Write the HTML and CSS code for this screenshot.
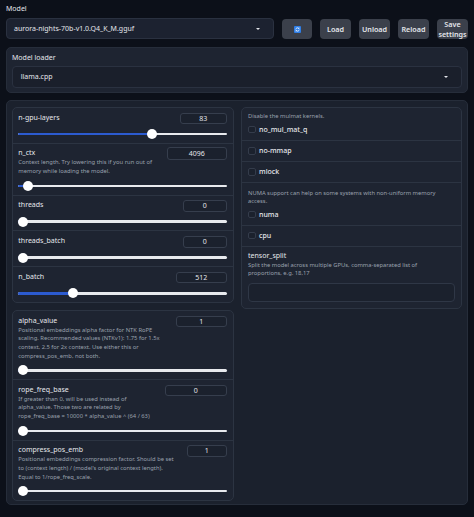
FILE: index.html
```html
<!DOCTYPE html>
<html>
<head>
<meta charset="utf-8">
<link rel="stylesheet" href="styles.css">
</head>
<body>
<div class="page">
  <div class="toprow">
    <div class="model-field">
      <div class="field-label">Model</div>
      <div class="select top-select"><span>aurora-nights-70b-v1.0.Q4_K_M.gguf</span><span class="caret"></span></div>
    </div>
    <button class="btn icon-btn"><svg width="7" height="7" viewBox="0 0 14 14"><rect width="14" height="14" rx="2" fill="#2f7ee6"/><path d="M3.6 7a3.4 3.4 0 0 1 5.9-2.3" fill="none" stroke="#fff" stroke-width="1.6"/><path d="M10.4 7a3.4 3.4 0 0 1-5.9 2.3" fill="none" stroke="#fff" stroke-width="1.6"/><path d="M10.6 2.6v3h-3z" fill="#fff"/><path d="M3.4 11.4v-3h3z" fill="#fff"/></svg></button>
    <button class="btn">Load</button>
    <button class="btn">Unload</button>
    <button class="btn">Reload</button>
    <button class="btn save">Save settings</button>
  </div>

  <div class="loader">
    <div class="field-label">Model loader</div>
    <div class="select inner-select"><span>llama.cpp</span><span class="caret"></span></div>
  </div>

  <div class="panel">
    <div class="col">
      <div class="group">
        <div class="row">
          <div class="head"><div class="lbl">n-gpu-layers</div><div class="num w47">83</div></div>
          <div class="slider"><div class="track" style="--v:0.647"><div class="fill"></div><div class="thumb"></div></div></div>
        </div>
        <div class="row">
          <div class="head"><div><div class="lbl">n_ctx</div><div class="info">Context length. Try lowering this if you run out of<br>memory while loading the model.</div></div><div class="num w60 tall">4096</div></div>
          <div class="slider"><div class="track" style="--v:0.022"><div class="fill"></div><div class="thumb"></div></div></div>
        </div>
        <div class="row">
          <div class="head"><div class="lbl">threads</div><div class="num w44">0</div></div>
          <div class="slider"><div class="track" style="--v:0"><div class="fill"></div><div class="thumb"></div></div></div>
        </div>
        <div class="row">
          <div class="head"><div class="lbl">threads_batch</div><div class="num w44">0</div></div>
          <div class="slider"><div class="track" style="--v:0"><div class="fill"></div><div class="thumb"></div></div></div>
        </div>
        <div class="row">
          <div class="head"><div class="lbl">n_batch</div><div class="num w51">512</div></div>
          <div class="slider"><div class="track" style="--v:0.25"><div class="fill"></div><div class="thumb"></div></div></div>
        </div>
      </div>

      <div class="group">
        <div class="row">
          <div class="head"><div><div class="lbl">alpha_value</div><div class="info">Positional embeddings alpha factor for NTK RoPE<br>scaling. Recommended values (NTKv1): 1.75 for 1.5x<br>context, 2.5 for 2x context. Use either this or<br>compress_pos_emb, not both.</div></div><div class="num w51">1</div></div>
          <div class="slider"><div class="track" style="--v:0"><div class="fill"></div><div class="thumb"></div></div></div>
        </div>
        <div class="row">
          <div class="head"><div><div class="lbl">rope_freq_base</div><div class="info">If greater than 0, will be used instead of<br>alpha_value. Those two are related by<br>rope_freq_base = 10000 * alpha_value ^ (64 / 63)</div></div><div class="num w62">0</div></div>
          <div class="slider"><div class="track" style="--v:0"><div class="fill"></div><div class="thumb"></div></div></div>
        </div>
        <div class="row">
          <div class="head"><div><div class="lbl">compress_pos_emb</div><div class="info">Positional embeddings compression factor. Should be set<br>to (context length) / (model's original context length).<br>Equal to 1/rope_freq_scale.</div></div><div class="num w40">1</div></div>
          <div class="slider"><div class="track" style="--v:0"><div class="fill"></div><div class="thumb"></div></div></div>
        </div>
      </div>
    </div>

    <div class="col">
      <div class="group rgroup">
        <div class="crow first">
          <div class="info">Disable the mulmat kernels.</div>
          <label class="cb-line"><span class="cb"></span><span class="cb-label">no_mul_mat_q</span></label>
        </div>
        <div class="crow">
          <label class="cb-line"><span class="cb"></span><span class="cb-label">no-mmap</span></label>
        </div>
        <div class="crow">
          <label class="cb-line"><span class="cb"></span><span class="cb-label">mlock</span></label>
        </div>
        <div class="crow numa">
          <div class="info">NUMA support can help on some systems with non-uniform memory<br>access.</div>
          <label class="cb-line"><span class="cb"></span><span class="cb-label">numa</span></label>
        </div>
        <div class="crow">
          <label class="cb-line"><span class="cb"></span><span class="cb-label">cpu</span></label>
        </div>
        <div class="crow tsplit">
          <div class="lbl">tensor_split</div>
          <div class="info">Split the model across multiple GPUs, comma-separated list of<br>proportions, e.g. 18,17</div>
          <div class="textbox"></div>
        </div>
      </div>
    </div>
  </div>
</div>
</body>
</html>
```

FILE: styles.css
```css
body {
  margin: 0;
  background: #0c1019;
  font-family: "Noto Sans", "DejaVu Sans", sans-serif;
  color: #e4e6eb;
}

.page {
  width: 474px;
  box-sizing: border-box;
  padding: 4.3px 6px 0 6px;
}

.toprow {
  display: flex;
  align-items: flex-end;
}

.model-field {
  width: 268px;
  margin-right: 8.5px;
}

.field-label {
  font-size: 7px;
  line-height: 10px;
  font-weight: 400;
  color: #e4e6eb;
}

.model-field .field-label {
  margin-bottom: 4px;
}

.select {
  display: flex;
  align-items: center;
  justify-content: space-between;
  box-sizing: border-box;
  border: 1px solid #2a3140;
  border-radius: 4px;
  font-size: 7px;
  color: #e4e6eb;
}

.top-select {
  height: 20.7px;
  background: #1c2230;
  padding: 0 13px 0 7px;
}

.caret {
  width: 0;
  height: 0;
  border-left: 2px solid transparent;
  border-right: 2px solid transparent;
  border-top: 2.5px solid #e4e6eb;
}

.btn {
  width: 31px;
  height: 19.5px;
  margin-left: 8px;
  padding: 0;
  border: none;
  border-radius: 4px;
  background: #3b404b;
  color: #e4e6eb;
  font-family: "Noto Sans", "DejaVu Sans", sans-serif;
  font-weight: 600;
  font-size: 7.2px;
  line-height: 9px;
  display: flex;
  align-items: center;
  justify-content: center;
  flex-shrink: 0;
}

.icon-btn {
  width: 30px;
  margin-left: 0;
}

.icon-btn svg {
  display: block;
}

.save {
  line-height: 10px;
  text-align: center;
}

.loader {
  margin-top: 8.3px;
  border: 1px solid #262d3a;
  border-radius: 5px;
  background: #1e2431;
  padding: 4.3px 5px 4.4px;
}

.loader .field-label {
  margin-bottom: 3.7px;
}

.inner-select {
  height: 21.3px;
  background: #1a1f2b;
  padding: 0 13px 0 7.7px;
}

.panel {
  margin-top: 7px;
  border: 1px solid #262d3a;
  border-radius: 5px;
  background: #1b212d;
  padding: 6.2px 5px 3px;
  display: grid;
  grid-template-columns: 1fr 1fr;
  column-gap: 7px;
  align-items: start;
}

.col {
  display: flex;
  flex-direction: column;
  gap: 7px;
  min-width: 0;
}

.group {
  border: 1px solid #2c3442;
  border-radius: 5px;
  background: #1e2431;
}

.row {
  padding: 4.5px 5.8px 0 5.3px;
}

.row + .row {
  border-top: 1px solid #2c3442;
}

.head {
  display: flex;
  justify-content: space-between;
  align-items: flex-start;
}

.lbl {
  font-size: 7px;
  line-height: 10px;
  font-weight: 430;
  color: #e6e8ec;
  white-space: nowrap;
}

.info {
  font-size: 5.8px;
  line-height: 8.7px;
  color: #9aa1ad;
  white-space: nowrap;
}

.num {
  box-sizing: border-box;
  height: 11.6px;
  border: 1px solid #363e4d;
  border-radius: 3px;
  background: #1b212d;
  font-size: 7px;
  line-height: 9.6px;
  text-align: center;
  color: #e4e6eb;
  flex-shrink: 0;
}

.num.tall {
  height: 13px;
  line-height: 11px;
  margin-top: -1.5px;
}

.w40 { width: 40px; }
.w44 { width: 44px; }
.w47 { width: 47px; }
.w51 { width: 51px; }
.w60 { width: 60px; }
.w62 { width: 62px; }

.slider {
  height: 18.75px;
  box-sizing: border-box;
  padding-top: 8.75px;
}

.track {
  position: relative;
  height: 2.5px;
  border-radius: 2px;
  background: #e8eaee;
}

.fill {
  height: 100%;
  width: calc(5px + (100% - 10px) * var(--v));
  border-radius: 2px;
  background: #2c5bd0;
}

.thumb {
  position: absolute;
  top: 50%;
  left: calc(5px + (100% - 10px) * var(--v));
  width: 10px;
  height: 10px;
  border-radius: 50%;
  background: #ffffff;
  transform: translate(-50%, -50%);
}

.crow {
  padding: 5.2px 5.7px 5px 6.5px;
}

.crow + .crow {
  border-top: 1px solid #2c3442;
}

.crow.first {
  padding-top: 3.5px;
}

.crow.first .cb-line {
  margin-top: 4.25px;
}

.crow.numa {
  padding-top: 5.65px;
}

.crow.numa .cb-line {
  margin-top: 3.5px;
}

.crow.tsplit {
  padding-top: 4px;
  padding-bottom: 5.6px;
}

.cb-line {
  display: flex;
  align-items: center;
  gap: 3.5px;
  height: 10px;
}

.cb {
  box-sizing: border-box;
  width: 7.5px;
  height: 7.5px;
  border: 1px solid #343c4b;
  border-radius: 2px;
  background: #1b212d;
}

.cb-label {
  font-size: 7px;
  line-height: 10px;
  font-weight: 500;
  color: #e6e8ec;
}

.textbox {
  margin-top: 5px;
  height: 19px;
  box-sizing: border-box;
  border: 1px solid #2f3746;
  border-radius: 4px;
  background: #1b212d;
}
```
